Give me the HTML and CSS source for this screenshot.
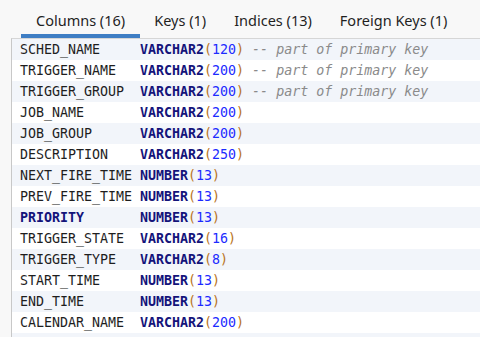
FILE: index.html
```html
<!DOCTYPE html>
<html lang="en">
    <head>
        <title>QRTZ_TRIGGERS</title>
        <link rel="stylesheet" href="styles.css">
    </head>
    <body>
        <nav class="tabs">
            <span class="tab tab-active">Columns (16)</span>
            <span class="tab">Keys (1)</span>
            <span class="tab">Indices (13)</span>
            <span class="tab">Foreign Keys (1)</span>
        </nav>

        <div class="columns">
            <div class="row"><span class="name">SCHED_NAME</span><span class="type">VARCHAR2</span><span class="paren">(</span><span class="num">120</span><span class="paren">)</span><span class="comment">&nbsp;-- part of primary key</span></div>
            <div class="row"><span class="name">TRIGGER_NAME</span><span class="type">VARCHAR2</span><span class="paren">(</span><span class="num">200</span><span class="paren">)</span><span class="comment">&nbsp;-- part of primary key</span></div>
            <div class="row"><span class="name">TRIGGER_GROUP</span><span class="type">VARCHAR2</span><span class="paren">(</span><span class="num">200</span><span class="paren">)</span><span class="comment">&nbsp;-- part of primary key</span></div>
            <div class="row"><span class="name">JOB_NAME</span><span class="type">VARCHAR2</span><span class="paren">(</span><span class="num">200</span><span class="paren">)</span></div>
            <div class="row"><span class="name">JOB_GROUP</span><span class="type">VARCHAR2</span><span class="paren">(</span><span class="num">200</span><span class="paren">)</span></div>
            <div class="row"><span class="name">DESCRIPTION</span><span class="type">VARCHAR2</span><span class="paren">(</span><span class="num">250</span><span class="paren">)</span></div>
            <div class="row"><span class="name">NEXT_FIRE_TIME</span><span class="type">NUMBER</span><span class="paren">(</span><span class="num">13</span><span class="paren">)</span></div>
            <div class="row"><span class="name">PREV_FIRE_TIME</span><span class="type">NUMBER</span><span class="paren">(</span><span class="num">13</span><span class="paren">)</span></div>
            <div class="row"><span class="name name-key">PRIORITY</span><span class="type">NUMBER</span><span class="paren">(</span><span class="num">13</span><span class="paren">)</span></div>
            <div class="row"><span class="name">TRIGGER_STATE</span><span class="type">VARCHAR2</span><span class="paren">(</span><span class="num">16</span><span class="paren">)</span></div>
            <div class="row"><span class="name">TRIGGER_TYPE</span><span class="type">VARCHAR2</span><span class="paren">(</span><span class="num">8</span><span class="paren">)</span></div>
            <div class="row"><span class="name">START_TIME</span><span class="type">NUMBER</span><span class="paren">(</span><span class="num">13</span><span class="paren">)</span></div>
            <div class="row"><span class="name">END_TIME</span><span class="type">NUMBER</span><span class="paren">(</span><span class="num">13</span><span class="paren">)</span></div>
            <div class="row"><span class="name">CALENDAR_NAME</span><span class="type">VARCHAR2</span><span class="paren">(</span><span class="num">200</span><span class="paren">)</span></div>
            <div class="row"></div>
        </div>
    </body>
</html>
```

FILE: styles.css
```css
body {
    margin: 0;
    background: #f8f8f8;
    overflow: hidden;
}

/* Tabs */
.tabs {
    display: flex;
    height: 38px;
    padding-left: 22px;
    font-family: "Noto Sans", sans-serif;
    font-size: 14.5px;
    color: #1f1f1f;
}

.tab {
    padding: 0 14px;
    box-sizing: border-box;
    height: 38px;
    line-height: 40px;
    border-bottom: 4px solid transparent;
}

.tab-active {
    margin-left: -1px;
    padding: 0 15px;
    border-bottom-color: #3f7ec4;
}

/* Column list */
.columns {
    margin-left: 11px;
    border-top: 1px solid #d6d6d6;
    border-left: 1px solid #c8c8c8;
    background: #fff;
    font-family: "DejaVu Sans Mono", monospace;
    font-size: 13.3px;
    color: #1e1e1e;
}

.row {
    display: flex;
    height: 21px;
    line-height: 21px;
    padding-left: 8px;
    white-space: pre;
}

.row:nth-child(odd) {
    background: #f2f5fa;
}

.name {
    width: 120px;
    flex-shrink: 0;
}

.name-key,
.type {
    font-weight: bold;
    color: #14147a;
}

.paren {
    color: #b8731a;
}

.num {
    color: #1c2bff;
}

.comment {
    font-style: italic;
    color: #8a8a8a;
}
```
